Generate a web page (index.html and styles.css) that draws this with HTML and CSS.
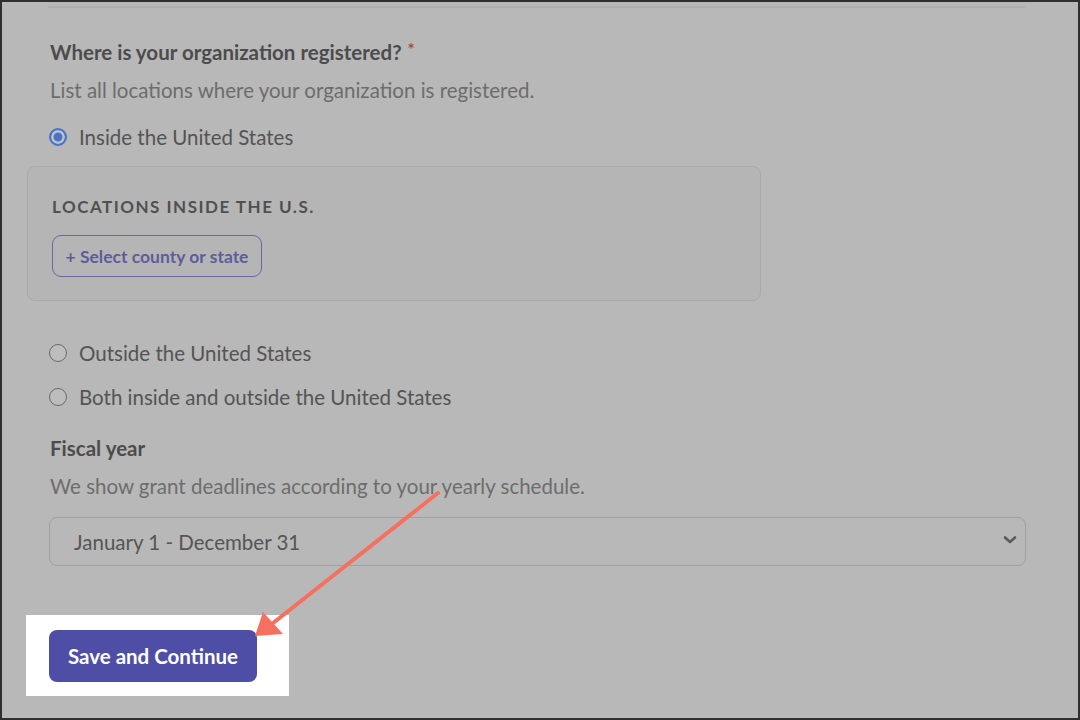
FILE: index.html
```html
<!DOCTYPE html>
<html lang="en">
<head>
<meta charset="utf-8">
<title>Organization registration</title>
<link rel="stylesheet" href="styles.css">
</head>
<body>
<div class="frame">
  <div class="content">
    <div class="top-rule"></div>

    <h2 class="q-title">Where is your organization registered? <span class="req">*</span></h2>
    <p class="q-help">List all locations where your organization is registered.</p>

    <div class="radio-row first">
      <span class="radio checked"></span>
      <span class="radio-label">Inside the United States</span>
    </div>

    <div class="loc-box">
      <div class="loc-title">LOCATIONS INSIDE THE U.S.</div>
      <button class="select-btn">+ Select county or state</button>
    </div>

    <div class="radio-row after-box">
      <span class="radio"></span>
      <span class="radio-label">Outside the United States</span>
    </div>
    <div class="radio-row next">
      <span class="radio"></span>
      <span class="radio-label">Both inside and outside the United States</span>
    </div>

    <h2 class="q-title fiscal">Fiscal year</h2>
    <p class="q-help">We show grant deadlines according to your yearly schedule.</p>

    <div class="select">
      <span class="select-value">January 1 - December 31</span>
      <svg class="chevron" width="14" height="10" viewBox="0 0 14 10"><path d="M2 2.5 L7 7 L12 2.5" fill="none" stroke="#5a5a5a" stroke-width="2.6" stroke-linecap="round" stroke-linejoin="round"/></svg>
    </div>

    <div class="highlight">
      <button class="save-btn">Save and Continue</button>
    </div>
  </div>

  <svg class="arrow" width="1080" height="720" viewBox="0 0 1080 720">
    <line x1="438" y1="493" x2="268" y2="627" stroke="#f6705f" stroke-width="4" stroke-linecap="round"/>
    <polygon points="255,636 263,612 283,634" fill="#f6705f"/>
  </svg>
</div>
</body>
</html>
```

FILE: styles.css
```css
* { box-sizing: border-box; }

html, body {
  margin: 0;
  padding: 0;
}

body {
  font-family: Lato, "Noto Sans", sans-serif;
  background: #333;
}

.frame {
  position: relative;
  width: 1080px;
  height: 720px;
  border: 2px solid #2f2f2f;
  background: #b8b8b8;
  overflow: hidden;
}

.content {
  padding: 4px 0 0 46px;
  width: 1023px;
}

.top-rule {
  height: 2px;
  background: #b0b0b0;
}

.q-title {
  margin: 30px 0 0 2px;
  font-size: 20.5px;
  line-height: 24px;
  font-weight: 700;
  color: #4c4c4c;
}

.q-title.fiscal {
  margin-top: 27px;
}

.req {
  color: #b04a40;
  font-size: 17px;
  vertical-align: 4px;
  margin-left: 1px;
}

.q-help {
  margin: 14px 0 0 2px;
  font-size: 20.5px;
  line-height: 24px;
  color: #6d6d6d;
}

.radio-row {
  display: flex;
  align-items: center;
  gap: 12px;
  height: 24px;
  margin-left: 1px;
}

.radio-row.first { margin-top: 23px; }
.radio-row.after-box { margin-top: 40px; }
.radio-row.next { margin-top: 20px; }

.radio {
  width: 18px;
  height: 18px;
  border-radius: 50%;
  border: 1.5px solid #6a6a6a;
  background: #bdbdbd;
  flex: none;
}

.radio.checked {
  border: 2px solid #4d73c6;
  background: #4d73c6;
  box-shadow: inset 0 0 0 2.5px #c0c4cc;
}

.radio-label {
  font-size: 20.5px;
  color: #545454;
}

.loc-box {
  margin: 17px 0 0 -21px;
  width: 734px;
  height: 135px;
  border: 1px solid #a9a9a9;
  border-radius: 8px;
  background: #b5b5b5;
  padding: 30px 0 0 24px;
}

.loc-title {
  font-size: 17px;
  line-height: 20px;
  font-weight: 700;
  letter-spacing: 1.5px;
  color: #505050;
}

.select-btn {
  margin-top: 18px;
  height: 42px;
  width: 210px;
  border: 1.5px solid #6a67a8;
  border-radius: 9px;
  background: transparent;
  font-family: Lato, "Noto Sans", sans-serif;
  font-size: 17.5px;
  font-weight: 700;
  color: #5f5c9c;
  padding: 0;
}

.select {
  margin: 19px 0 0 1px;
  width: 977px;
  height: 49px;
  border: 1.5px solid #a0a0a0;
  border-radius: 8px;
  display: flex;
  align-items: center;
  justify-content: space-between;
  padding: 0 8px 0 24px;
}

.select-value {
  font-size: 20.5px;
  color: #555;
}

.chevron {
  margin-top: -4px;
}

.highlight {
  margin: 49px 0 0 -22px;
  width: 263px;
  height: 81px;
  background: #fff;
  padding: 15px 0 0 23px;
}

.save-btn {
  width: 208px;
  height: 52px;
  border: none;
  border-radius: 8px;
  background: #4f4ea6;
  color: #fff;
  font-family: Lato, "Noto Sans", sans-serif;
  font-size: 20.5px;
  font-weight: 700;
  padding: 0;
}

.arrow {
  position: absolute;
  left: -2px;
  top: -2px;
  pointer-events: none;
}
```
